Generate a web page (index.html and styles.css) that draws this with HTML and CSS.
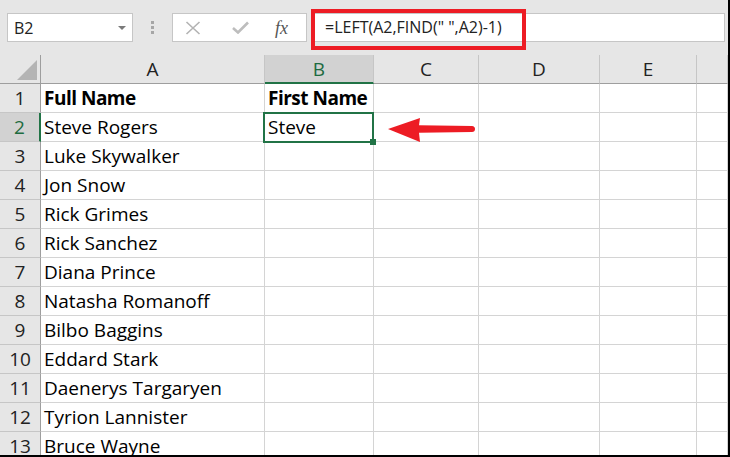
FILE: index.html
```html
<!DOCTYPE html>
<html>
<head>
<meta charset="utf-8">
<link rel="stylesheet" href="styles.css">
</head>
<body>
<div class="app">
  <div class="toolbar">
    <div class="namebox"><span>B2</span><span class="caret"></span></div>
    <div class="grip"><i></i><i></i><i></i></div>
    <div class="fnbox">
      <svg class="ico-x" width="16" height="14" viewBox="0 0 16 14"><path d="M1.5 1 L14.5 13 M14.5 1 L1.5 13" stroke="#b3b3b3" stroke-width="1.6" fill="none"/></svg>
      <svg class="ico-check" width="17" height="13" viewBox="0 0 17 13"><path d="M1 7 L6 11.5 L16 1.5" stroke="#bdbdbd" stroke-width="2.6" fill="none"/></svg>
      <span class="fx">fx</span>
    </div>
    <div class="formula">
      <span class="ftext">=LEFT(A2,FIND(" ",A2)-1)</span>
      <div class="callout"></div>
    </div>
  </div>
  <div class="sheet">
    <div class="ch corner"><span class="tri"></span></div>
    <div class="ch">A</div>
    <div class="ch sel">B</div>
    <div class="ch">C</div>
    <div class="ch">D</div>
    <div class="ch">E</div>
    <div class="ch"></div>

    <div class="rh">1</div><div class="c b">Full Name</div><div class="c b">First Name</div><div class="c"></div><div class="c"></div><div class="c"></div><div class="c"></div>
    <div class="rh sel">2</div><div class="c">Steve Rogers</div><div class="c active">Steve<span class="handle"></span></div><div class="c mark"><svg class="arrow" width="90" height="28" viewBox="0 0 90 28"><path d="M2 13 L34 2 L33 9.2 L86 10 Q89 10.3 89 13 Q89 15.8 86 16 L33 16.8 L34 26 Z" fill="#ed1c24"/></svg></div><div class="c"></div><div class="c"></div><div class="c"></div>
    <div class="rh">3</div><div class="c">Luke Skywalker</div><div class="c"></div><div class="c"></div><div class="c"></div><div class="c"></div><div class="c"></div>
    <div class="rh">4</div><div class="c">Jon Snow</div><div class="c"></div><div class="c"></div><div class="c"></div><div class="c"></div><div class="c"></div>
    <div class="rh">5</div><div class="c">Rick Grimes</div><div class="c"></div><div class="c"></div><div class="c"></div><div class="c"></div><div class="c"></div>
    <div class="rh">6</div><div class="c">Rick Sanchez</div><div class="c"></div><div class="c"></div><div class="c"></div><div class="c"></div><div class="c"></div>
    <div class="rh">7</div><div class="c">Diana Prince</div><div class="c"></div><div class="c"></div><div class="c"></div><div class="c"></div><div class="c"></div>
    <div class="rh">8</div><div class="c">Natasha Romanoff</div><div class="c"></div><div class="c"></div><div class="c"></div><div class="c"></div><div class="c"></div>
    <div class="rh">9</div><div class="c">Bilbo Baggins</div><div class="c"></div><div class="c"></div><div class="c"></div><div class="c"></div><div class="c"></div>
    <div class="rh">10</div><div class="c">Eddard Stark</div><div class="c"></div><div class="c"></div><div class="c"></div><div class="c"></div><div class="c"></div>
    <div class="rh">11</div><div class="c">Daenerys Targaryen</div><div class="c"></div><div class="c"></div><div class="c"></div><div class="c"></div><div class="c"></div>
    <div class="rh">12</div><div class="c">Tyrion Lannister</div><div class="c"></div><div class="c"></div><div class="c"></div><div class="c"></div><div class="c"></div>
    <div class="rh">13</div><div class="c">Bruce Wayne</div><div class="c"></div><div class="c"></div><div class="c"></div><div class="c"></div><div class="c"></div>
  </div>
</div>
</body>
</html>
```
FILE: styles.css
```css
body {
  margin: 0;
}
.app {
  width: 730px;
  height: 457px;
  box-sizing: border-box;
  border-right: 2px solid #000;
  border-bottom: 2px solid #000;
  background: #fff;
  overflow: hidden;
  font-family: "Open Sans", sans-serif;
  color: #000;
}
.toolbar {
  height: 55px;
  box-sizing: border-box;
  background: #e6e6e6;
  display: flex;
  align-items: flex-start;
  padding: 13px 0 0 7px;
}
.namebox {
  width: 126px;
  height: 29px;
  box-sizing: border-box;
  background: #fff;
  border: 1px solid #c6c6c6;
  display: flex;
  align-items: center;
  justify-content: space-between;
  padding: 0 6px 0 6px;
  font-size: 16px;
  color: #222;
}
.caret {
  width: 0;
  height: 0;
  border-left: 4px solid transparent;
  border-right: 4px solid transparent;
  border-top: 4px solid #7a7a7a;
}
.grip {
  margin-left: 18px;
  width: 3px;
  display: flex;
  flex-direction: column;
  gap: 2px;
  padding-top: 8px;
}
.grip i {
  display: block;
  width: 3px;
  height: 3px;
  background: #a6a6a6;
}
.fnbox {
  margin-left: 18px;
  width: 135px;
  height: 29px;
  box-sizing: border-box;
  background: #fff;
  border: 1px solid #c6c6c6;
  display: flex;
  align-items: center;
}
.ico-x {
  margin-left: 12px;
}
.ico-check {
  margin-left: 31px;
}
.fx {
  margin-left: 26px;
  font-family: "Liberation Serif", serif;
  font-style: italic;
  font-size: 18px;
  color: #555;
  line-height: 1;
}
.formula {
  position: relative;
  margin-left: 6px;
  margin-right: 3px;
  flex: 1;
  height: 29px;
  box-sizing: border-box;
  background: #fff;
  border: 1px solid #c6c6c6;
  padding-left: 11px;
  font-size: 16px;
  line-height: 27px;
  color: #222;
}
.callout {
  position: absolute;
  left: -3px;
  top: -5px;
  width: 215px;
  height: 41px;
  box-sizing: border-box;
  border: 4px solid #ed1c24;
}
.sheet {
  display: grid;
  grid-template-columns: 41px 224px 109px 105px 121px 97px 1fr;
  grid-auto-rows: 29px;
}
.sheet > div {
  box-sizing: border-box;
  border-right: 1px solid #d4d4d4;
  border-bottom: 1px solid #d4d4d4;
  font-size: 19px;
  line-height: 28px;
  white-space: nowrap;
}
.c {
  padding: 0 3px;
}
.b {
  font-weight: bold;
  letter-spacing: -0.5px;
}
.ch {
  background: #e6e6e6;
  border-right-color: #c6c6c6 !important;
  border-bottom-color: #9e9e9e !important;
  text-align: center;
  color: #222;
  line-height: 28px;
}
.ch.sel {
  background: #d2d2d2;
  color: #1d6b40;
  border-bottom: 2px solid #217346 !important;
}
.corner {
  position: relative;
  border-right-color: #9e9e9e !important;
}
.tri {
  position: absolute;
  right: 3px;
  bottom: 3px;
  width: 0;
  height: 0;
  border-left: 20px solid transparent;
  border-bottom: 20px solid #b4b4b4;
}
.rh {
  background: #e6e6e6;
  border-right-color: #9e9e9e !important;
  border-bottom-color: #c6c6c6 !important;
  text-align: center;
  color: #222;
}
.rh.sel {
  background: #d2d2d2;
  color: #1d6b40;
  border-right: 2px solid #217346 !important;
}
.active {
  position: relative;
}
.active::after {
  content: "";
  position: absolute;
  left: -2px;
  top: -1px;
  width: 111px;
  height: 31px;
  box-sizing: border-box;
  border: 2px solid #217346;
}
.handle {
  position: absolute;
  left: 105px;
  top: 26px;
  width: 6px;
  height: 6px;
  background: #217346;
  z-index: 2;
}
.mark {
  position: relative;
}
.arrow {
  position: absolute;
  left: 12px;
  top: 3px;
}
```
